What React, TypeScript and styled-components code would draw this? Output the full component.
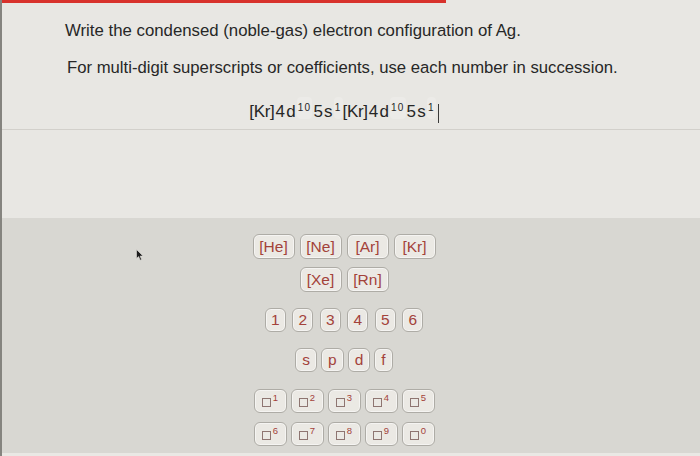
import { ReactElement } from 'react'
import styled, { createGlobalStyle } from 'styled-components'

const GlobalStyle = createGlobalStyle`
  html, body {
    margin: 0;
    padding: 0;
    background: #e7e6e2;
  }
  body {
    font-family: "Liberation Sans", Arial, sans-serif;
  }
`

const NOBLE_TOP = ['[He]', '[Ne]', '[Ar]', '[Kr]']
const NOBLE_BOTTOM = ['[Xe]', '[Rn]']
const COEFFICIENTS = ['1', '2', '3', '4', '5', '6']
const ORBITALS = ['s', 'p', 'd', 'f']
const SUPERSCRIPTS_TOP = ['1', '2', '3', '4', '5']
const SUPERSCRIPTS_BOTTOM = ['6', '7', '8', '9', '0']

function ConfigPart(): ReactElement {
  return (
    <>
      <Bracket>[Kr]</Bracket>
      <Orbital>4d</Orbital>
      <Sup>10</Sup>
      <Orbital>5s</Orbital>
      <Sup>1</Sup>
    </>
  )
}

function App(): ReactElement {
  return (
    <>
      <GlobalStyle />
      <Page>
        <RedBar />
        <Question>
          <Title>Write the condensed (noble-gas) electron configuration of Ag.</Title>
          <Instruction>For multi-digit superscripts or coefficients, use each number in succession.</Instruction>
        </Question>
        <AnswerField>
          <Formula>
            <ConfigPart />
            <ConfigPart />
            <Caret />
          </Formula>
        </AnswerField>
        <Spacer />
        <Palette>
          {/* noble gas cores */}
          <KeyGroup>
            <KeyRow>
              {NOBLE_TOP.map((label) => (
                <Key key={label} $kind="core">
                  {label}
                </Key>
              ))}
            </KeyRow>
            <KeyRow>
              {NOBLE_BOTTOM.map((label) => (
                <Key key={label} $kind="core">
                  {label}
                </Key>
              ))}
            </KeyRow>
          </KeyGroup>

          <KeyRow $gap={6.5}>
            {COEFFICIENTS.map((label) => (
              <Key key={label} $kind="digit">
                {label}
              </Key>
            ))}
          </KeyRow>

          <KeyRow $gap={4}>
            {ORBITALS.map((label) => (
              <Key key={label} $kind="orbital">
                {label}
              </Key>
            ))}
          </KeyRow>

          {/* superscript templates */}
          <KeyGroup $gap={9} $offset={1}>
            <KeyRow $gap={4}>
              {SUPERSCRIPTS_TOP.map((n) => (
                <Key key={n} $kind="sup">
                  <Placeholder />
                  <SupDigit>{n}</SupDigit>
                </Key>
              ))}
            </KeyRow>
            <KeyRow $gap={4}>
              {SUPERSCRIPTS_BOTTOM.map((n) => (
                <Key key={n} $kind="sup">
                  <Placeholder />
                  <SupDigit>{n}</SupDigit>
                </Key>
              ))}
            </KeyRow>
          </KeyGroup>

          <Pointer width="8" height="12" viewBox="0 0 8 12">
            <path d="M0.5 0.5 L0.5 9.5 L2.6 7.6 L4.2 11.2 L5.6 10.6 L4.1 7.1 L7 7 Z" fill="#1c1c1c" stroke="#e0dfda" strokeWidth="0.6" />
          </Pointer>
        </Palette>
        <BottomEdge />
      </Page>
    </>
  )
}

export default App

const Page = styled.div`
  width: 698px;
  height: 456px;
  border-left: 2px solid #85847f;
  background: #e8e7e3;
  display: flex;
  flex-direction: column;
  overflow: hidden;
`

const RedBar = styled.div`
  width: 444px;
  height: 3px;
  background: #d8322c;
  flex-shrink: 0;
`

const Question = styled.div`
  padding: 17.5px 0 0 63px;
  color: #272727;
  font-size: 16.8px;
  line-height: 20px;
`

const Title = styled.div``

const Instruction = styled.div`
  margin-top: 17px;
  padding-left: 2px;
  font-size: 16.7px;
`

const AnswerField = styled.div`
  margin-top: 23.5px;
  padding: 0 14px 4px 0;
  border-bottom: 1px solid #d2d0cb;
  display: flex;
  justify-content: center;
`

const Formula = styled.div`
  display: flex;
  align-items: baseline;
  font-size: 17px;
  line-height: 22px;
  color: #262626;
`

const Bracket = styled.span`
  letter-spacing: -0.3px;
`

const Orbital = styled.span`
  letter-spacing: 1.2px;
  padding-left: 1px;
`

const Sup = styled.span`
  font-size: 10px;
  position: relative;
  top: -6px;
  letter-spacing: 1.2px;
  padding: 0 1px;
  border-radius: 4px;
  background: rgba(255, 255, 255, 0.18);
`

const Caret = styled.span`
  align-self: center;
  width: 1px;
  height: 19px;
  margin-left: 2px;
  background: #3a3a3a;
`

const Spacer = styled.div`
  height: 88px;
  flex-shrink: 0;
`

const Palette = styled.div`
  flex: 1;
  position: relative;
  background: #d8d7d2;
  padding: 16px 14px 0 0;
  display: flex;
  flex-direction: column;
  align-items: center;
  gap: 16px;
`

const KeyGroup = styled.div<{ $gap?: number; $offset?: number }>`
  display: flex;
  flex-direction: column;
  align-items: center;
  gap: ${(p) => p.$gap ?? 8}px;
  margin-top: ${(p) => p.$offset ?? 0}px;
`

const KeyRow = styled.div<{ $gap?: number }>`
  display: flex;
  justify-content: center;
  gap: ${(p) => p.$gap ?? 5}px;
`

const keyWidth: Record<string, string> = {
  core: '42px',
  digit: '21px',
  orbital: 'auto',
  sup: '33px',
}

const Key = styled.button<{ $kind: 'core' | 'digit' | 'orbital' | 'sup' }>`
  box-sizing: border-box;
  width: ${(p) => keyWidth[p.$kind]};
  height: ${(p) => (p.$kind === 'sup' ? '24px' : p.$kind === 'core' ? '25px' : '24px')};
  padding: 0 ${(p) => (p.$kind === 'orbital' ? '6px' : '0')};
  display: flex;
  align-items: center;
  justify-content: center;
  background: #ebe9e4;
  border: 1px solid #aeaca6;
  border-radius: 6px;
  box-shadow: inset 0 0 0 1px rgba(255, 255, 255, 0.5);
  color: #a3423a;
  font-family: "Liberation Sans", Arial, sans-serif;
  font-size: 15.5px;
  line-height: 1;
  cursor: pointer;
`

const Placeholder = styled.span`
  width: 7px;
  height: 7px;
  border: 1px solid #8e7571;
  margin-top: 2px;
`

const SupDigit = styled.span`
  font-size: 9.5px;
  margin-left: 2px;
  margin-top: -6px;
  color: #a3423a;
`

const Pointer = styled.svg`
  position: absolute;
  left: 134px;
  top: 31px;
`

const BottomEdge = styled.div`
  height: 3px;
  background: #e9e8e4;
  flex-shrink: 0;
`
